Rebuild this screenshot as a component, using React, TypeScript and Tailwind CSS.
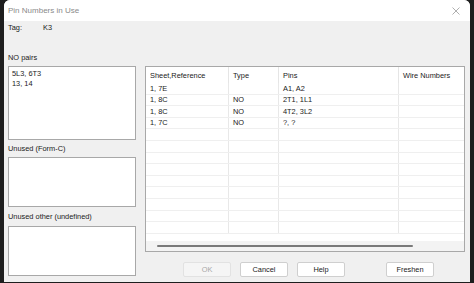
import React from 'react';

const rows = [
  { sheet: '1, 7E', type: '', pins: 'A1, A2', wire: '' },
  { sheet: '1, 8C', type: 'NO', pins: '2T1, 1L1', wire: '' },
  { sheet: '1, 8C', type: 'NO', pins: '4T2, 3L2', wire: '' },
  { sheet: '1, 7C', type: 'NO', pins: '?, ?', wire: '' },
  { sheet: '', type: '', pins: '', wire: '' },
  { sheet: '', type: '', pins: '', wire: '' },
  { sheet: '', type: '', pins: '', wire: '' },
  { sheet: '', type: '', pins: '', wire: '' },
  { sheet: '', type: '', pins: '', wire: '' },
  { sheet: '', type: '', pins: '', wire: '' },
  { sheet: '', type: '', pins: '', wire: '' },
  { sheet: '', type: '', pins: '', wire: '' },
  { sheet: '', type: '', pins: '', wire: '' },
];

function ListBox({ height, items = [] }: { height: string; items?: string[] }) {
  return (
    <div className={`${height} w-[128px] bg-white border border-[#a8a8a8] px-[3px] pt-[2px] leading-[10px]`}>
      {items.map((item, i) => (
        <div key={i}>{item}</div>
      ))}
    </div>
  );
}

function Button({ label, disabled }: { label: string; disabled?: boolean }) {
  return (
    <button
      className={`w-[48px] h-[15px] rounded-[2px] border flex items-center justify-center leading-none ${
        disabled ? 'bg-[#f5f5f5] border-[#e2e2e2] text-[#a8a8a8]' : 'bg-white border-[#cfcfcf] text-[#1a1a1a]'
      }`}
    >
      {label}
    </button>
  );
}

export default function App() {
  return (
    <div
      className="w-[474px] h-[283px] bg-[#1e1e1e] px-[4px] overflow-hidden"
      style={{ fontFamily: '"Liberation Sans", Arial, sans-serif' }}
    >
      <div className="w-[466px] h-[282px] rounded-t-[6px] overflow-hidden flex flex-col bg-[#f0f0f0]">
        {/* Title bar */}
        <div className="h-[21px] bg-white flex items-center justify-between pl-[4px] pr-[10px] shrink-0">
          <span className="text-[8px] text-[#8a8a8a]">Pin Numbers in Use</span>
          <svg width="8" height="8" viewBox="0 0 8 8" className="text-[#9a9a9a]">
            <path d="M0.5 0.5 L7.5 7.5 M7.5 0.5 L0.5 7.5" stroke="currentColor" strokeWidth="0.8" />
          </svg>
        </div>

        {/* Body */}
        <div className="flex flex-1 pl-[4px] text-[7.4px] text-[#1a1a1a]">
          {/* Left column */}
          <div className="flex flex-col w-[128px]">
            <div className="flex h-[12px] mt-[1px] items-center">
              <span className="w-[35px]">Tag:</span>
              <span>K3</span>
            </div>
            <div className="h-[12px] mt-[18px] flex items-center">NO pairs</div>
            <div className="mt-[2px]">
              <ListBox height="h-[74px]" items={['5L3, 6T3', '13, 14']} />
            </div>
            <div className="h-[12px] mt-[3px] flex items-center">Unused (Form-C)</div>
            <div className="mt-[2px]">
              <ListBox height="h-[50px]" />
            </div>
            <div className="h-[12px] mt-[4px] flex items-center">Unused other (undefined)</div>
            <div className="mt-[3px]">
              <ListBox height="h-[50px]" />
            </div>
          </div>

          {/* Right column */}
          <div className="flex flex-col ml-[9px] mt-[45px]">
            <div className="w-[320px] h-[186px] bg-white border border-[#a8a8a8] flex flex-col overflow-hidden">
              <div className="flex-1 overflow-hidden">
                <div className="grid grid-cols-[83px_50px_120px_66px] h-[16px]">
                  {['Sheet,Reference', 'Type', 'Pins', 'Wire Numbers'].map((h, i) => (
                    <div
                      key={h}
                      className={`flex items-center pl-[4px] pt-[2px] ${i < 3 ? 'border-r border-[#e5e5e5]' : ''}`}
                    >
                      {h}
                    </div>
                  ))}
                </div>
                {rows.map((r, idx) => (
                  <div
                    key={idx}
                    className="grid grid-cols-[83px_50px_120px_66px] h-[11.6px] border-b border-[#efefef]"
                  >
                    {[r.sheet, r.type, r.pins, r.wire].map((c, i) => (
                      <div
                        key={i}
                        className={`flex items-center pl-[4px] leading-none ${i < 3 ? 'border-r border-[#e8e8e8]' : ''}`}
                      >
                        {c}
                      </div>
                    ))}
                  </div>
                ))}
              </div>
              {/* Horizontal scrollbar */}
              <div className="h-[10px] bg-[#f3f3f3] flex items-center pl-[11px] shrink-0">
                <div className="w-[256px] h-[1.5px] rounded-full bg-[#7a7a7a]" />
              </div>
            </div>

            <div className="flex mt-[10px]">
              <div className="ml-[38px] flex gap-[9px]">
                <Button label="OK" disabled />
                <Button label="Cancel" />
                <Button label="Help" />
              </div>
              <div className="ml-[41px]">
                <Button label="Freshen" />
              </div>
            </div>
          </div>
        </div>
      </div>
    </div>
  );
}
